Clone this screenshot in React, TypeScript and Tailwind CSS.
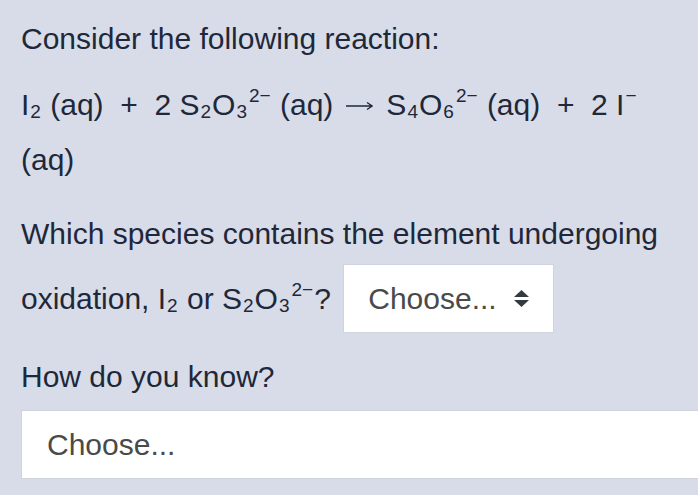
const font = { fontFamily: '"Liberation Sans", Arial, sans-serif' };

// subscripts / superscripts tuned to the reference
function Sub({ children }: { children: React.ReactNode }) {
  return <sub className="-bottom-[3px] px-[1px] text-[19px] leading-none">{children}</sub>;
}
function Sup({ children }: { children: React.ReactNode }) {
  return <sup className="-top-[13px] px-[1px] text-[19px] leading-none">{children}</sup>;
}

function ReactionArrow() {
  return (
    <svg width="27" height="10" viewBox="0 0 27 10" className="relative -top-[4px] mx-[13px] inline-block align-baseline">
      <path d="M0 5 H26 M21 1.5 L26.2 5 L21 8.5" fill="none" stroke="#1e283a" strokeWidth="1.4" />
    </svg>
  );
}

function Arrows() {
  return (
    <svg width="15" height="17" viewBox="0 0 15 17" className="ml-[17px] shrink-0">
      <path d="M7.5 0 L15 7 H0 Z" fill="#333a40" />
      <path d="M7.5 17 L15 10 H0 Z" fill="#333a40" />
    </svg>
  );
}

export default function App() {
  return (
    <div
      className="min-h-[495px] w-[698px] overflow-hidden bg-[#d7dce8] pl-[21px] pr-[21px] pt-[11px] text-[30px] leading-[55px] text-[#1e283a]"
      style={font}
    >
      <p>Consider the following reaction:</p>

      <p className="mt-[11px]">
        I<Sub>2</Sub> (aq) &nbsp;+ &nbsp;2 S<Sub>2</Sub>O<Sub>3</Sub>
        <Sup>2−</Sup> (aq)
        <ReactionArrow />
        S<Sub>4</Sub>O<Sub>6</Sub>
        <Sup>2−</Sup> (aq) &nbsp;+ &nbsp;2 I<Sup>−</Sup>
        <br />
        (aq)
      </p>

      <p className="mt-[19px]">
        Which species contains the element undergoing oxidation, I<Sub>2</Sub> or S<Sub>2</Sub>O
        <Sub>3</Sub>
        <Sup>2−</Sup>?{' '}
        <span className="ml-[4px] mt-[3px] inline-flex h-[69px] w-[211px] items-center border border-[#cfd3dc] bg-white pl-[24px] text-[#4a4a4a]">
          <span className="leading-normal">Choose...</span>
          <Arrows />
        </span>
      </p>

      <p className="mt-[16px]">How do you know?</p>

      <div className="mt-[6px] -mr-[40px] flex h-[69px] items-center border border-[#cfd3dc] bg-white pl-[25px] text-[#4a4a4a]">
        <span className="leading-normal">Choose...</span>
      </div>
    </div>
  );
}
